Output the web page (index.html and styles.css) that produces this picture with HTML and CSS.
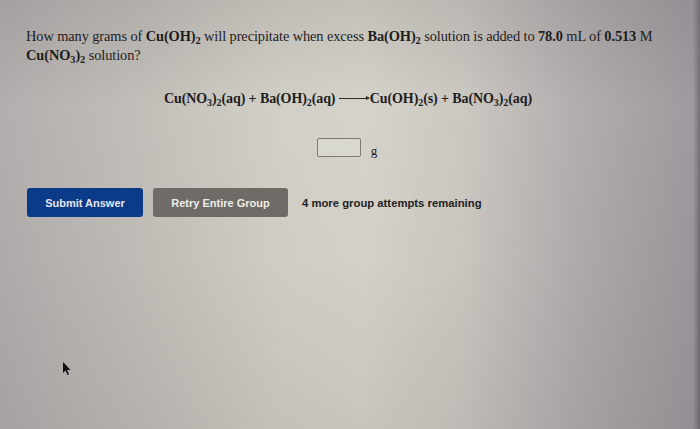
FILE: index.html
```html
<!DOCTYPE html>
<html>
<head>
<meta charset="utf-8">
<link rel="stylesheet" href="styles.css">
</head>
<body>
<div class="screen">
  <div class="question">
    <p class="prompt">How many grams of <b>Cu(OH)<sub>2</sub></b> will precipitate when excess <b>Ba(OH)<sub>2</sub></b> solution is added to <b>78.0</b> mL of <b>0.513</b> M <b>Cu(NO<sub>3</sub>)<sub>2</sub></b> solution?</p>
    <p class="equation">Cu(NO<sub>3</sub>)<sub>2</sub>(aq) + Ba(OH)<sub>2</sub>(aq) <span class="arrow"></span>Cu(OH)<sub>2</sub>(s) + Ba(NO<sub>3</sub>)<sub>2</sub>(aq)</p>
    <div class="answer"><span class="box"></span><span class="unit">g</span></div>
  </div>
  <div class="actions">
    <button class="btn submit">Submit Answer</button>
    <button class="btn retry">Retry Entire Group</button>
    <span class="remaining">4 more group attempts remaining</span>
  </div>
  <svg class="cursor" width="10" height="15" viewBox="0 0 10 15"><path d="M1 1 L1 12 L3.5 9.5 L5.5 14 L7 13.3 L5 9 L8.5 9 Z" fill="#111"/></svg>
</div>
</body>
</html>
```
FILE: styles.css
```css
html, body { margin: 0; padding: 0; }
body { width: 700px; height: 429px; overflow: hidden; }
.screen {
  position: relative;
  width: 700px;
  height: 429px;
  box-sizing: border-box;
  padding: 27px 0 0 26px;
  background:
    linear-gradient(180deg, rgba(120,115,118,0.18) 0%, rgba(255,255,250,0.05) 25%, rgba(0,0,0,0) 60%, rgba(90,88,92,0.10) 100%),
    linear-gradient(90deg, #aeaaa9 0%, #bdbab5 18%, #cfcdc4 40%, #d3d1c7 52%, #c9c5bf 66%, #aba6a7 85%, #99959a 99%, #6e6a6e 100%);
}
.question { width: 648px; font-family: "Liberation Serif", "Times New Roman", serif; color: #1e1d1d; }
.prompt { margin: 0; font-size: 14.4px; line-height: 19px; letter-spacing: -0.1px; }
sub { font-size: 72%; vertical-align: -3px; line-height: 0; }
.equation { margin: 25px 0 0; text-align: center; font-weight: bold; font-size: 14px; line-height: 18px; letter-spacing: -0.1px; padding-right: 4px; }
.arrow { display: inline-block; width: 30px; height: 1px; background: #2a2a2a; vertical-align: 4px; position: relative; margin-right: 1px; }
.arrow::after { content: ""; position: absolute; right: -1px; top: -2px; border-left: 4px solid #2a2a2a; border-top: 2.5px solid transparent; border-bottom: 2.5px solid transparent; }
.answer { margin-top: 30px; display: flex; justify-content: center; align-items: flex-end; padding-right: 6px; }
.box { width: 42px; height: 17px; border: 1px solid #7d7b78; border-radius: 2px; background: #d9d8d0; }
.unit { margin-left: 10px; font-size: 13px; line-height: 13px; }
.actions { margin-top: 31px; display: flex; align-items: center; }
.btn {
  height: 29px; border: none; border-radius: 3px; padding: 0;
  font-family: "Liberation Sans", Arial, sans-serif; font-weight: bold; font-size: 11px; color: #e6e6ee;
}
.submit { width: 116px; background: #0b3a88; margin-left: 1px; }
.retry { width: 135px; margin-left: 10px; background: #6f6b66; color: #eeeeea; }
.remaining { margin-left: 14px; font-family: "Liberation Sans", Arial, sans-serif; font-weight: bold; font-size: 11.3px; color: #222; }
.cursor { position: absolute; left: 62px; top: 361px; }
```
